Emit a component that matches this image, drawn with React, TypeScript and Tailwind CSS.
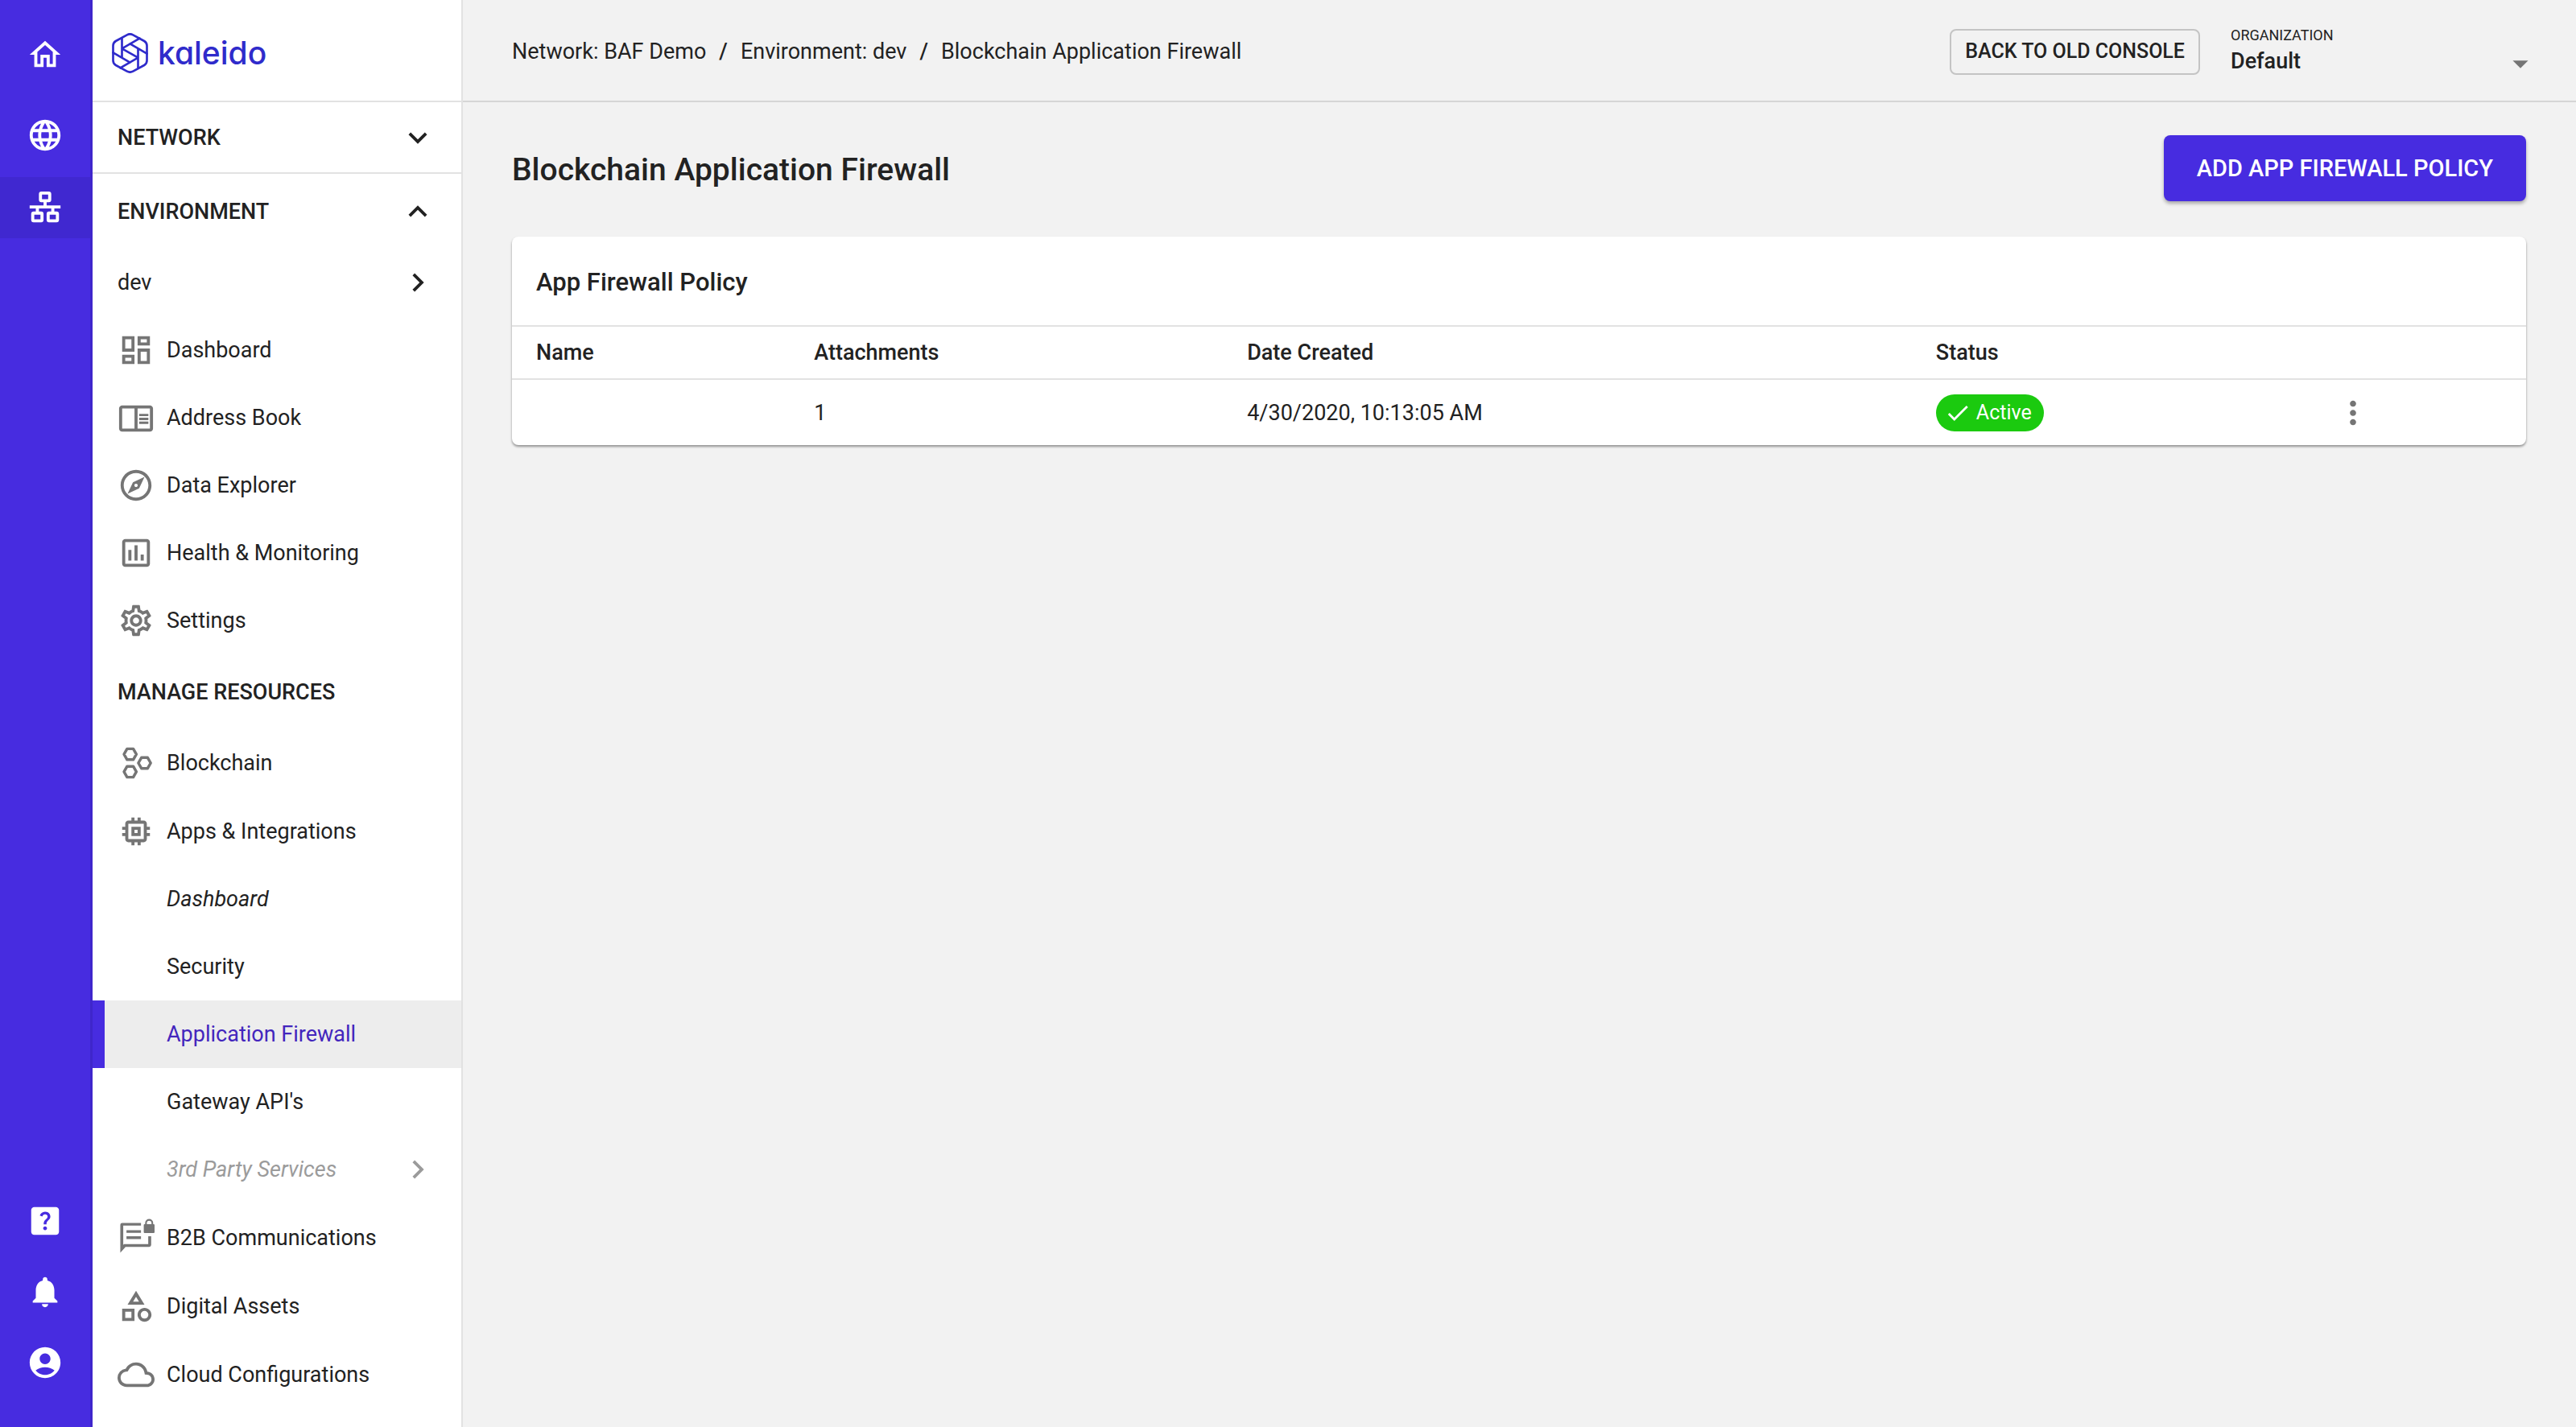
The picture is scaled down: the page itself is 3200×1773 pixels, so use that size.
import type { ComponentType, SVGProps } from "react";
import {
  MdAccountCircle,
  MdArrowDropDown,
  MdCheck,
  MdChevronRight,
  MdExpandLess,
  MdExpandMore,
  MdHelpCenter,
  MdLanguage,
  MdMoreVert,
  MdNotifications,
  MdOutlineAssessment,
  MdOutlineCategory,
  MdOutlineChromeReaderMode,
  MdOutlineCloud,
  MdOutlineDashboard,
  MdOutlineExplore,
  MdOutlineHome,
  MdOutlineMemory,
  MdOutlineSettings,
} from "react-icons/md";

type Icon = ComponentType<SVGProps<SVGSVGElement>>;

interface Item { label: string; icon: Icon; children?: SubItem[] }
interface SubItem { label: string; italic?: boolean; active?: boolean; muted?: boolean }

const ENVIRONMENT: Item[] = [
  { label: "Dashboard", icon: MdOutlineDashboard },
  { label: "Address Book", icon: MdOutlineChromeReaderMode },
  { label: "Data Explorer", icon: MdOutlineExplore },
  { label: "Health & Monitoring", icon: MdOutlineAssessment },
  { label: "Settings", icon: MdOutlineSettings },
];

const RESOURCES: Item[] = [
  { label: "Blockchain", icon: HexagonsIcon },
  {
    label: "Apps & Integrations",
    icon: MdOutlineMemory,
    children: [
      { label: "Dashboard", italic: true },
      { label: "Security" },
      { label: "Application Firewall", active: true },
      { label: "Gateway API's" },
      { label: "3rd Party Services", italic: true, muted: true },
    ],
  },
  { label: "B2B Communications", icon: SecureMessageIcon },
  { label: "Digital Assets", icon: MdOutlineCategory },
  { label: "Cloud Configurations", icon: MdOutlineCloud },
];

const POLICIES = [{ name: "", attachments: 1, created: "4/30/2020, 10:13:05 AM", status: "Active" }];

export default function App() {
  return (
    <div className="flex min-h-screen bg-[#f2f2f2] font-['Roboto',sans-serif] text-[27px] leading-10 text-[#222222]">
      <Rail />
      <Sidebar />
      <div className="flex min-w-0 flex-1 flex-col">
        <TopBar />
        <main className="pr-[62px] pl-[61px] pt-[41px]">
          <div className="flex items-center justify-between">
            <h1 className="pt-1 text-[39px] font-medium">Blockchain Application Firewall</h1>
            <button type="button" className="h-[82px] rounded-lg bg-[#472ce0] px-[41px] text-[29px] font-medium text-white shadow-[0_3px_4px_rgba(0,0,0,0.3)]">
              ADD APP FIREWALL POLICY
            </button>
          </div>
          <PolicyCard />
        </main>
      </div>
    </div>
  );
}

function Rail() {
  return (
    <nav aria-label="Main" className="flex w-28 flex-none flex-col justify-between bg-[#472ce0] pt-[30px] pb-[42px] text-white">
      <div className="flex flex-col">
        <RailLink label="Home" icon={MdOutlineHome} />
        <div className="mt-6">
          <RailLink label="Networks" icon={MdLanguage} />
        </div>
        <div className="mt-3.5 bg-[#4028d0]">
          <RailLink label="Environments" icon={TopologyIcon} />
        </div>
      </div>
      <div className="flex flex-col gap-3">
        <RailLink label="Help" icon={MdHelpCenter} />
        <RailLink label="Notifications" icon={MdNotifications} />
        <RailLink label="Account" icon={MdAccountCircle} />
      </div>
    </nav>
  );
}

function RailLink({ label, icon: Icon }: { label: string; icon: Icon }) {
  return (
    <a href="#" aria-label={label} className="flex h-[76px] items-center justify-center">
      <Icon className="size-[46px]" />
    </a>
  );
}

function Sidebar() {
  return (
    <aside className="w-[463px] flex-none border-r-2 border-l-3 border-r-[#e2e2e2] border-l-[#3f26cb] bg-white">
      <div className="flex h-[127px] items-center gap-3 border-b-2 border-[#e2e2e2] pt-1.5 pl-6 text-[#2f2bcb]">
        <LogoMark />
        <span className="font-['Inter',sans-serif] text-[39px] font-medium [font-feature-settings:'cv11']">kaleido</span>
      </div>
      <button type="button" className="flex h-[89px] w-full items-center justify-between border-b-2 border-[#e2e2e2] px-[31px] font-medium">
        NETWORK
        <MdExpandMore className="size-[46px]" />
      </button>
      <button type="button" className="flex h-[93px] w-full items-center justify-between px-[31px] font-medium">
        ENVIRONMENT
        <MdExpandLess className="size-[46px]" />
      </button>
      <a href="#" className="flex h-[84px] items-center justify-between px-[31px]">
        dev
        <MdChevronRight className="size-[46px]" />
      </a>
      <ul>
        {ENVIRONMENT.map((item) => (
          <NavItem key={item.label} item={item} />
        ))}
      </ul>
      <h2 className="flex h-[93px] items-center pl-[31px] font-medium">MANAGE RESOURCES</h2>
      <ul className="flex flex-col gap-px">
        {RESOURCES.map((item) => (
          <NavItem key={item.label} item={item} />
        ))}
      </ul>
    </aside>
  );
}

function NavItem({ item }: { item: Item }) {
  const Icon = item.icon;
  return (
    <li>
      <a href="#" className="flex h-[84px] items-center gap-[15px] pl-[31px]">
        <Icon className="size-[46px] text-[#757575]" />
        {item.label}
      </a>
      {item.children && (
        <ul>
          {item.children.map((c) => (
            <li key={c.label}>
              <a
                href="#"
                className={`flex h-[84px] items-center justify-between pr-[31px] ${
                  c.active ? "border-l-[15px] border-[#472ce0] bg-[#ededed] pl-[77px] text-[#4326bd]" : "pl-[92px]"
                } ${c.italic ? "italic" : ""} ${c.muted ? "text-[#9b9b9b]" : ""}`}
              >
                {c.label}
                {c.muted && <MdChevronRight className="size-[46px]" />}
              </a>
            </li>
          ))}
        </ul>
      )}
    </li>
  );
}

function TopBar() {
  return (
    <header className="flex h-[127px] items-center justify-between border-b-2 border-[#d6d6d6] pt-[3px] pr-[46px] pl-[61px]">
      <nav aria-label="Breadcrumb" className="flex gap-4">
        <a href="#">Network: BAF Demo</a>
        <span className="font-medium">/</span>
        <a href="#">Environment: dev</a>
        <span className="font-medium">/</span>
        <a href="#">Blockchain Application Firewall</a>
      </nav>
      <div className="flex items-center gap-[38px]">
        <button type="button" className="h-[57px] rounded-lg border-2 border-[#c4c4c4] px-[17px] text-[25px] font-medium">
          BACK TO OLD CONSOLE
        </button>
        <div className="w-[383px]">
          <label htmlFor="organization" className="block text-[18px] leading-6">ORGANIZATION</label>
          <div className="relative">
            <select id="organization" className="block w-full appearance-none bg-transparent font-medium">
              <option>Default</option>
            </select>
            <MdArrowDropDown className="pointer-events-none absolute top-0 right-0 size-[46px] text-[#757575]" />
          </div>
        </div>
      </div>
    </header>
  );
}

function PolicyCard() {
  return (
    <section className="mt-11 overflow-hidden rounded-lg bg-white shadow-[0_2px_3px_rgba(0,0,0,0.4)]">
      <h2 className="flex h-[110px] items-center px-[30px] pt-1 text-[31px] font-medium">App Firewall Policy</h2>
      <table className="w-full table-fixed border-collapse text-left">
        <colgroup>
          <col className="w-[13.8%]" />
          <col className="w-[21.5%]" />
          <col className="w-[34.2%]" />
          <col className="w-[20.9%]" />
          <col />
        </colgroup>
        <thead>
          <tr className="h-[66px] border-y-2 border-[#e2e2e2]">
            <th className="pl-[30px] font-medium">Name</th>
            <th className="pl-[30px] font-medium">Attachments</th>
            <th className="pl-[30px] font-medium">Date Created</th>
            <th className="pl-[30px] font-medium">Status</th>
            <th aria-label="Actions" />
          </tr>
        </thead>
        <tbody>
          {POLICIES.map((p) => (
            <tr key={p.created} className="h-[82px]">
              <td className="pl-[30px]">{p.name}</td>
              <td className="pl-[30px]">{p.attachments}</td>
              <td className="pl-[30px]">{p.created}</td>
              <td className="pl-[30px]">
                <span className="inline-flex h-[46px] items-center gap-1.5 rounded-full bg-[#1bca0f] pr-[15px] pl-2.5 align-middle text-[25px] text-white">
                  <MdCheck className="size-[34px]" />
                  {p.status}
                </span>
              </td>
              <td>
                <button type="button" aria-label="More actions" className="flex w-[50px] justify-center text-[#757575]">
                  <MdMoreVert className="size-[46px]" />
                </button>
              </td>
            </tr>
          ))}
        </tbody>
      </table>
    </section>
  );
}

function LogoMark() {
  return (
    <svg viewBox="0 0 134 150" className="h-[50px] w-[45px]" fill="none" stroke="currentColor" strokeWidth="8" strokeLinejoin="round" strokeLinecap="round" aria-hidden="true">
      <path d="M56 7Q67 1 78 7L120 30Q130 36 130 47V103Q130 114 120 120L78 143Q67 149 56 143L14 120Q4 114 4 103V47Q4 36 14 30Z" />
      {/* aperture blades */}
      <path d="M37 18V92M37 58L103 20M67 40L130 77M97 58V132M97 92L31 130M67 110L4 73M37 58L97 92" />
    </svg>
  );
}

function TopologyIcon(props: SVGProps<SVGSVGElement>) {
  return (
    <svg viewBox="0 0 24 24" fill="none" stroke="currentColor" strokeWidth="2" aria-hidden="true" {...props}>
      <rect x="9" y="2.5" width="6" height="5" rx="0.6" />
      <rect x="4" y="15.5" width="6" height="5" rx="0.6" />
      <rect x="14" y="15.5" width="6" height="5" rx="0.6" />
      <path d="M12 7.5v4M2 11.5h20M7 11.5v4M17 11.5v4" />
    </svg>
  );
}

function HexagonsIcon(props: SVGProps<SVGSVGElement>) {
  return (
    <svg viewBox="0 0 24 24" fill="none" stroke="currentColor" strokeWidth="1.8" strokeLinejoin="round" aria-hidden="true" {...props}>
      <path d="M4.2 6.3l2-3.5h4l2 3.5-2 3.5h-4z" />
      <path d="M13.5 12l2-3.5h4l2 3.5-2 3.5h-4z" />
      <path d="M4.2 17.7l2-3.5h4l2 3.5-2 3.5h-4z" />
    </svg>
  );
}

function SecureMessageIcon(props: SVGProps<SVGSVGElement>) {
  return (
    <svg viewBox="0 0 24 24" fill="currentColor" overflow="visible" aria-hidden="true" {...props}>
      <path d="M3 2.3h12.2v1.8H3.7v12.4l.5-.5h15.7v-5h1.9v5.6q0 1.3-1.3 1.3H5.2l-3.4 3.7V3.5q0-1.2 1.2-1.2z" />
      <path d="M5.8 7h9.4v1.8H5.8zM5.8 11h9.4v1.8H5.8z" />
      <path d="M17.6 3.1h.3v-.7a2.6 2.6 0 0 1 5.2 0v.7h.3q.6 0 .6.6v4.6q0 .6-.6.6h-5.8q-.6 0-.6-.6V3.7q0-.6.6-.6zm1.4 0h3v-.7a1.5 1.5 0 0 0-3 0z" fillRule="evenodd" />
    </svg>
  );
}
